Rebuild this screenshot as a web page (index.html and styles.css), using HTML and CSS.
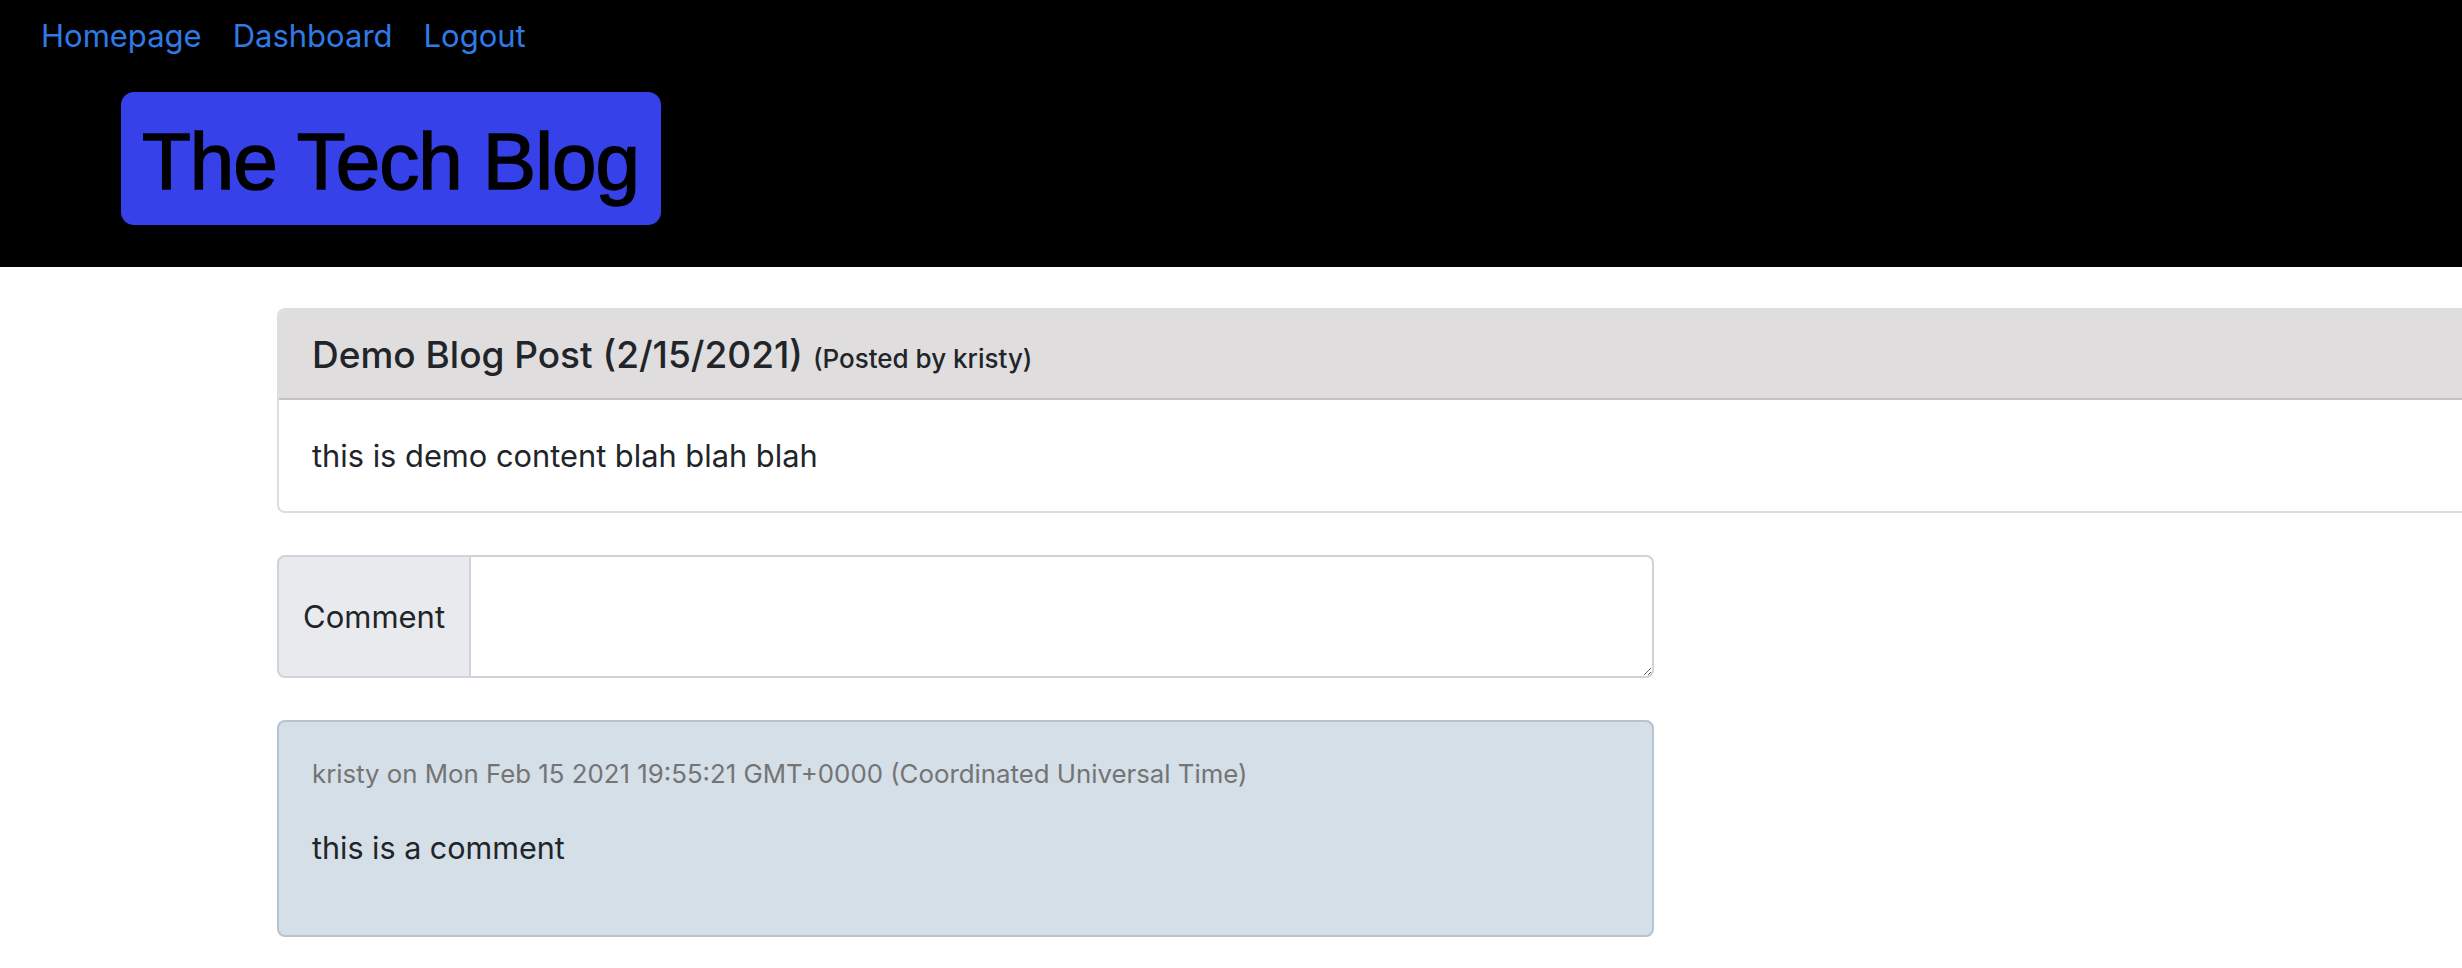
FILE: index.html
```html
<!DOCTYPE html>
<html lang="en">
<head>
    <meta charset="UTF-8">
    <meta name="viewport" content="width=device-width, initial-scale=1.0">
    <title>The Tech Blog</title>
    <link rel="stylesheet" href="styles.css">
</head>
<body>
    <header class="site-header">
        <nav class="nav">
            <a href="#">Homepage</a>
            <a href="#">Dashboard</a>
            <a href="#">Logout</a>
        </nav>
        <h1 class="brand">The Tech Blog</h1>
    </header>
    <main class="main">
        <div class="post">
            <div class="post-header">
                <h2>Demo Blog Post (2/15/2021) <small>(Posted by kristy)</small></h2>
            </div>
            <div class="post-body">
                <p>this is demo content blah blah blah</p>
            </div>
        </div>
        <form class="comment-form">
            <label class="comment-label" for="commentText">Comment</label>
            <textarea id="commentText" class="comment-input"></textarea>
        </form>
        <div class="comment">
            <p class="comment-meta">kristy on Mon Feb 15 2021 19:55:21 GMT+0000 (Coordinated Universal Time)</p>
            <p class="comment-text">this is a comment</p>
        </div>
    </main>
</body>
</html>
```

FILE: styles.css
```css
body {
    margin: 0;
    font-family: Inter, "Noto Sans", sans-serif;
    color: #212529;
    background-color: #fff;
    overflow-x: hidden;
}
.site-header {
    background-color: #000;
    height: 267px;
    padding: 0 0 0 41px;
    box-sizing: border-box;
}
.nav {
    display: flex;
    gap: 31px;
    padding-top: 13px;
}
.nav a {
    color: #2f7ae5;
    text-decoration: none;
    font-size: 31px;
    line-height: 46px;
}
.brand {
    display: inline-block;
    margin: 33px 0 0 80px;
    padding: 22px 22px 15px 21px;
    background-color: #3641ea;
    border-radius: 13px;
    font-family: "Liberation Sans", Arial, sans-serif;
    font-weight: 400;
    font-size: 80px;
    letter-spacing: -1px;
    line-height: 96px;
    color: #000;
    -webkit-text-stroke: 1.5px #000;
}
.main {
    padding: 41px 0 0 277px;
}
.post {
    border: 2px solid #dedede;
    border-radius: 8px;
    margin-right: -20px;
    background-color: #fff;
}
.post-header {
    background-color: #dfdddd;
    border-bottom: 2px solid #c4c3c3;
    border-radius: 6px 6px 0 0;
    padding: 0 33px;
    height: 88px;
    display: flex;
    align-items: center;
}
.post-header h2 {
    margin: 0;
    font-size: 37px;
    font-weight: 500;
}
.post-header small {
    font-size: 26px;
    font-weight: 500;
}
.post-body {
    padding: 0 33px;
    height: 111px;
    display: flex;
    align-items: center;
}
.post-body p {
    margin: 0;
    font-size: 30.8px;
}
.comment-form {
    display: flex;
    width: 1377px;
    height: 123px;
    margin-top: 42px;
}
.comment-label {
    display: flex;
    align-items: center;
    padding: 0 26px 0 24px;
    width: 194px;
    box-sizing: border-box;
    background-color: #e9eaee;
    border: 2px solid #ced4da;
    border-radius: 8px 0 0 8px;
    font-size: 31px;
}
.comment-input {
    flex: 1;
    border: 2px solid #ced4da;
    border-left: none;
    border-radius: 0 8px 8px 0;
    font-family: inherit;
    font-size: 30px;
    resize: vertical;
    margin: 0;
}
.comment {
    width: 1377px;
    box-sizing: border-box;
    height: 217px;
    margin-top: 42px;
    padding: 36px 33px;
    background-color: #d4dfe8;
    border: 2px solid #b7c3cf;
    border-radius: 8px;
}
.comment-meta {
    margin: 0;
    font-size: 25.8px;
    color: #747474;
}
.comment-text {
    margin: 40px 0 0 0;
    font-size: 30.5px;
}
```
